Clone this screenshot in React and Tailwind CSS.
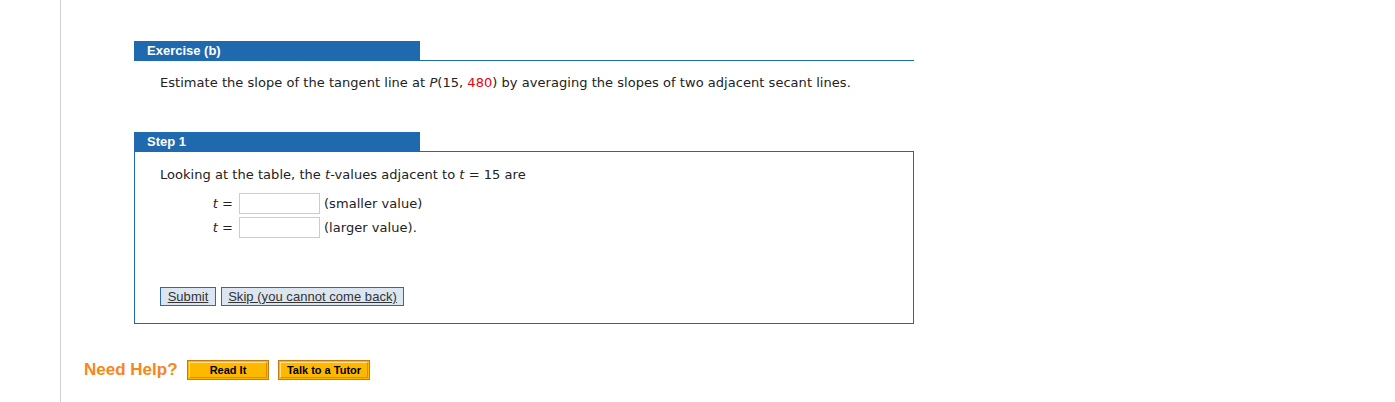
import React from "react";

const verdana = { fontFamily: '"DejaVu Sans", Verdana, sans-serif', letterSpacing: "0.04px" };

function Header({ children }) {
  return (
    <div className="flex items-end">
      <div className="w-[286px] h-[20px] bg-[#1f69ae] pl-[13px] flex items-center text-white font-bold text-[13px] font-['Liberation_Sans',Arial,sans-serif]">
        {children}
      </div>
      <div className="flex-1 h-[1px] bg-[#1f69ae]" />
    </div>
  );
}

function OrangeBtn({ children, w }) {
  return (
    <div className={`h-[20px] ${w} border border-[#c47a0c] bg-[#ffb800] p-[1px]`}>
      <div className="h-full w-full border-t border-l border-[#ffe08a] border-r border-b border-r-[#d88c00] border-b-[#d88c00] flex items-center justify-center text-[11px] font-bold text-black font-['Liberation_Sans',Arial,sans-serif]">
        {children}
      </div>
    </div>
  );
}

export default function App() {
  return (
    <div className="w-[1395px] h-[402px] bg-white flex">
      <div className="w-[60px] shrink-0" />
      <div className="w-[1px] bg-[#d0d0d0] shrink-0" />
      <div className="flex-1 relative">
        <div className="pl-[73px] pt-[41px] w-[853px]">
          <Header>Exercise (b)</Header>
          <div className="pl-[26px] pt-[14px] text-[13px] text-[#222] leading-[16px]" style={verdana}>
            Estimate the slope of the tangent line at <i>P</i>(15, <span className="text-[#e8000d]">480</span>) by averaging the slopes of two adjacent secant lines.
          </div>
          <div className="mt-[41px]">
            <div className="w-[286px] h-[19px] bg-[#1f69ae] pl-[13px] flex items-center text-white font-bold text-[13px] font-['Liberation_Sans',Arial,sans-serif]">
              Step 1
            </div>
            <div className="h-[173px] border border-[#1f69ae] pl-[25px] pt-[15px] text-[13px] text-[#222]" style={verdana}>
              <div className="leading-[16px]">
                Looking at the table, the <i>t</i>-values adjacent to <i>t</i> = 15 are
              </div>
              <div className="mt-[10px] flex flex-col gap-[3px]">
                <div className="flex items-center">
                  <div className="w-[79px] text-right pr-[6px]"><i>t</i> =</div>
                  <div className="w-[81px] h-[21px] border border-[#cccccc] bg-white" />
                  <div className="pl-[4px]">(smaller value)</div>
                </div>
                <div className="flex items-center">
                  <div className="w-[79px] text-right pr-[6px]"><i>t</i> =</div>
                  <div className="w-[81px] h-[21px] border border-[#cccccc] bg-white" />
                  <div className="pl-[4px]">(larger value).</div>
                </div>
              </div>
              <div className="mt-[49px] flex gap-[5px] font-['Liberation_Sans',Arial,sans-serif] text-[13px] text-[#333]">
                <div className="h-[19px] w-[56px] border border-[#2a6ab0] bg-[#dce6f1] flex items-center justify-center underline">Submit</div>
                <div className="h-[19px] w-[183px] border border-[#2a6ab0] bg-[#dce6f1] flex items-center justify-center underline">Skip (you cannot come back)</div>
              </div>
            </div>
          </div>
        </div>
        <div className="pl-[23px] mt-[33px] flex items-center">
          <div className="text-[17px] font-bold text-[#f7861c] font-['Liberation_Sans',Arial,sans-serif] w-[103px]">Need Help?</div>
          <OrangeBtn w="w-[82px]">Read It</OrangeBtn>
          <div className="w-[9px]" />
          <OrangeBtn w="w-[92px]">Talk to a Tutor</OrangeBtn>
        </div>
      </div>
    </div>
  );
}
